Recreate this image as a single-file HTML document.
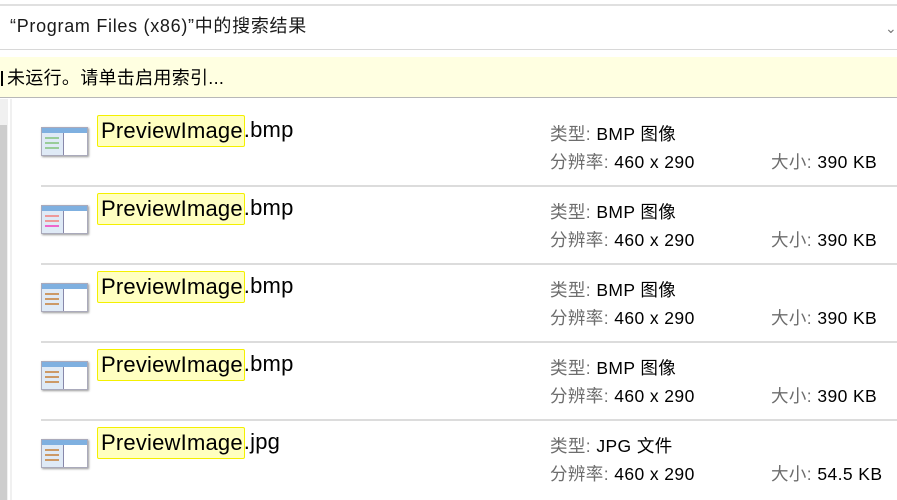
<!DOCTYPE html>
<html><head><meta charset="utf-8"><style>
*{margin:0;padding:0;box-sizing:border-box}
body{width:897px;height:500px;overflow:hidden;background:#fff;font-family:"Liberation Sans","Noto Sans CJK SC",sans-serif;position:relative;color:#000}
.abs{position:absolute}
.row{position:absolute;left:0;width:897px;height:78px}
.sep{position:absolute;left:41px;right:0;height:2px;background:#dcdcdc}
.icon{position:absolute;left:41px;top:19px;width:47px;height:29px;background:#fff;border:1px solid #aab;box-shadow:1px 1px 2px #999}
.icon .l{position:absolute;left:0;top:0;width:22px;height:100%;background:#dfeaf6;border-right:1px solid #88a}
.icon .t{position:absolute;left:0;top:0;width:100%;height:5px;background:#7fb0e0}
.icon .d{position:absolute;left:3px;width:14px;height:2px;background:#9c9}
.name{position:absolute;left:97px;top:7px;font-size:22px;line-height:30px;white-space:nowrap;letter-spacing:0.2px}
.hl{display:inline-block;background:#ffffc0;border:1px solid #f4f000;border-radius:2px;height:32px;padding-left:3px;padding-right:1px;vertical-align:top;margin-right:-1px}
.lab{position:absolute;font-size:17.5px;line-height:22px;white-space:nowrap;letter-spacing:0.4px}
.g{color:#6d6d6d}
</style></head><body>
<div class="abs" style="left:0;top:4px;width:897px;height:2px;background:#e0e0e0"></div>
<div class="abs" style="left:10px;top:14px;font-size:18px;line-height:24px;color:#1a1a1a;letter-spacing:0.7px">“Program Files (x86)”中的搜索结果</div>
<div class="abs" style="left:885px;top:20px;font-size:14px;color:#777">⌄</div>
<div class="abs" style="left:0;top:49px;width:897px;height:1px;background:#d8d8d8"></div>
<div class="abs" style="left:0;top:57px;width:897px;height:41px;background:#ffffe1;border-bottom:1px solid #b8b8b8"></div>
<div class="abs" style="left:1px;top:71px;width:2px;height:15px;background:#000"></div>
<div class="abs" style="left:7px;top:66px;font-size:18px;line-height:24px;letter-spacing:0.3px">未运行。请单击启用索引...</div>
<div class="abs" style="left:0;top:99px;width:8px;height:401px;background:#f0f0f0"></div>
<div class="abs" style="left:0;top:125px;width:7px;height:375px;background:#cdcdcd"></div>
<div class="abs" style="left:10px;top:99px;width:2px;height:401px;background:#f0f0f0"></div>

<div class="row" style="top:108px">
<div class="icon"><div class="l"></div><div class="t"></div><div class="d" style="top:9px"></div><div class="d" style="top:14px"></div><div class="d" style="top:19px"></div></div>
<div class="name"><span class="hl">PreviewImage</span>.bmp</div>
<div class="lab" style="left:550px;top:15px"><span class="g">类型:</span> BMP 图像</div>
<div class="lab" style="left:550px;top:43px"><span class="g">分辨率:</span> 460 x 290</div>
<div class="lab" style="left:771px;top:43px"><span class="g">大小:</span> 390 KB</div>
</div>
<div class="sep" style="top:185px"></div>
<div class="row" style="top:186px">
<div class="icon"><div class="l"></div><div class="t"></div><div class="d" style="top:9px;background:#e99"></div><div class="d" style="top:14px;background:#e99"></div><div class="d" style="top:19px;background:#e6c"></div></div>
<div class="name"><span class="hl">PreviewImage</span>.bmp</div>
<div class="lab" style="left:550px;top:15px"><span class="g">类型:</span> BMP 图像</div>
<div class="lab" style="left:550px;top:43px"><span class="g">分辨率:</span> 460 x 290</div>
<div class="lab" style="left:771px;top:43px"><span class="g">大小:</span> 390 KB</div>
</div>
<div class="sep" style="top:263px"></div>
<div class="row" style="top:264px">
<div class="icon"><div class="l"></div><div class="t"></div><div class="d" style="top:9px;background:#c96"></div><div class="d" style="top:14px;background:#c96"></div><div class="d" style="top:19px;background:#c96"></div></div>
<div class="name"><span class="hl">PreviewImage</span>.bmp</div>
<div class="lab" style="left:550px;top:15px"><span class="g">类型:</span> BMP 图像</div>
<div class="lab" style="left:550px;top:43px"><span class="g">分辨率:</span> 460 x 290</div>
<div class="lab" style="left:771px;top:43px"><span class="g">大小:</span> 390 KB</div>
</div>
<div class="sep" style="top:341px"></div>
<div class="row" style="top:342px">
<div class="icon"><div class="l"></div><div class="t"></div><div class="d" style="top:9px;background:#c96"></div><div class="d" style="top:14px;background:#c96"></div><div class="d" style="top:19px;background:#c96"></div></div>
<div class="name"><span class="hl">PreviewImage</span>.bmp</div>
<div class="lab" style="left:550px;top:15px"><span class="g">类型:</span> BMP 图像</div>
<div class="lab" style="left:550px;top:43px"><span class="g">分辨率:</span> 460 x 290</div>
<div class="lab" style="left:771px;top:43px"><span class="g">大小:</span> 390 KB</div>
</div>
<div class="sep" style="top:419px"></div>
<div class="row" style="top:420px">
<div class="icon"><div class="l"></div><div class="t"></div><div class="d" style="top:9px;background:#c96"></div><div class="d" style="top:14px;background:#c96"></div><div class="d" style="top:19px;background:#c96"></div></div>
<div class="name"><span class="hl">PreviewImage</span>.jpg</div>
<div class="lab" style="left:550px;top:15px"><span class="g">类型:</span> JPG 文件</div>
<div class="lab" style="left:550px;top:43px"><span class="g">分辨率:</span> 460 x 290</div>
<div class="lab" style="left:771px;top:43px"><span class="g">大小:</span> 54.5 KB</div>
</div>
</body></html>
